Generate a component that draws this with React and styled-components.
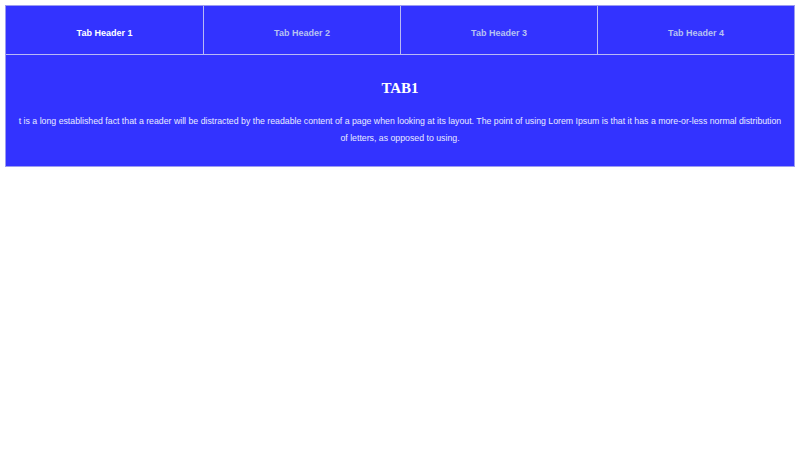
import React, { useState } from 'react';
import styled, { createGlobalStyle } from 'styled-components';

const GlobalStyle = createGlobalStyle`
  body {
    margin: 5px;
    background: #ffffff;
    font-family: "Liberation Sans", Arial, sans-serif;
  }
`;

const Tabs = styled.div`
  background: #3333ff;
  border: 1px solid #9c9cf0;
`;

const TabBar = styled.div`
  display: grid;
  grid-template-columns: repeat(4, 1fr);
  border-bottom: 1px solid #b9b9f5;
`;

const TabButton = styled.button`
  height: 48px;
  padding: 6px 0 0;
  background: transparent;
  border: none;
  border-left: 1px solid #b9b9f5;
  font-family: "Liberation Sans", Arial, sans-serif;
  font-size: 9px;
  font-weight: bold;
  color: ${p => (p.active ? '#ffffff' : '#b7c2f2')};
  cursor: pointer;
  &:first-child {
    border-left: none;
  }
`;

const Panel = styled.div`
  padding: 24px 12px 19px;
  text-align: center;
`;

const Title = styled.h2`
  margin: 0 0 15px;
  font-family: "Liberation Serif", "Times New Roman", serif;
  font-size: 15px;
  line-height: 19px;
  font-weight: bold;
  color: #ffffff;
`;

const Text = styled.p`
  margin: 0;
  font-size: 8.75px;
  line-height: 17px;
  color: #e8eaff;
`;

const tabs = [
  { label: 'Tab Header 1', title: 'TAB1' },
  { label: 'Tab Header 2', title: 'TAB2' },
  { label: 'Tab Header 3', title: 'TAB3' },
  { label: 'Tab Header 4', title: 'TAB4' },
];

const body =
  't is a long established fact that a reader will be distracted by the readable content of a page when looking at its layout. The point of using Lorem Ipsum is that it has a more-or-less normal distribution of letters, as opposed to using.';

const App = () => {
  const [current, setCurrent] = useState(0);
  return (
    <>
      <GlobalStyle />
      <Tabs>
        <TabBar>
          {tabs.map((t, i) => (
            <TabButton key={t.label} active={i === current} onClick={() => setCurrent(i)}>
              {t.label}
            </TabButton>
          ))}
        </TabBar>
        <Panel>
          <Title>{tabs[current].title}</Title>
          <Text>{body}</Text>
        </Panel>
      </Tabs>
    </>
  );
};

export default App;
